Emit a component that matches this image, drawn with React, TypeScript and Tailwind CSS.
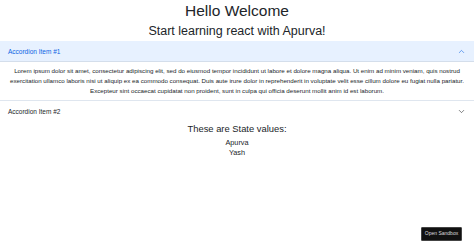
import { ChevronDown, ChevronUp } from "lucide-react"

const people = ["Apurva", "Yash"]

export default function App() {
  return (
    <div className="relative h-[248px] w-[474px] overflow-hidden bg-white font-['Liberation_Sans',Arial,sans-serif] text-[#212529]">
      <div className="text-center">
        <h1 className="pt-[1px] text-[15.5px] leading-[19px]">Hello Welcome</h1>
        <h2 className="mt-[2px] text-[12.5px] leading-[18px]">Start learning react with Apurva!</h2>
      </div>

      {/* accordion */}
      <div className="mt-[1px]">
        <div className="border-b border-[#dfe6ef]">
          <button className="flex h-[21px] w-full items-center justify-between bg-[#e7f1ff] px-[8px] text-[6.5px] text-[#0c63e4] shadow-[inset_0_-1px_0_rgba(0,0,0,0.08)]">
            <span>Accordion Item #1</span>
            <ChevronUp className="h-[9px] w-[9px]" strokeWidth={1.5} />
          </button>
          <p className="px-[6px] pb-[5px] pt-[4px] text-center text-[6.2px] leading-[9.8px]">
            Lorem ipsum dolor sit amet, consectetur adipiscing elit, sed do eiusmod tempor incididunt ut labore et dolore magna aliqua. Ut enim ad minim veniam, quis nostrud exercitation ullamco laboris nisi ut aliquip ex ea commodo consequat. Duis aute irure dolor in reprehenderit in voluptate velit esse cillum dolore eu fugiat nulla pariatur. Excepteur sint occaecat cupidatat non proident, sunt in culpa qui officia deserunt mollit anim id est laborum.
          </p>
        </div>
        <button className="flex h-[21px] w-full items-center justify-between px-[8px] text-[6.5px]">
          <span>Accordion Item #2</span>
          <ChevronDown className="h-[9px] w-[9px]" strokeWidth={1.5} />
        </button>
      </div>

      <div className="text-center">
        <h3 className="mt-[1px] text-[9.4px] leading-[12px]">These are State values:</h3>
        <div className="mt-[3px]">
          {people.map((p) => (
            <p key={p} className="text-[7.3px] leading-[10px]">{p}</p>
          ))}
        </div>
      </div>

      <button className="absolute left-[421px] top-[227px] h-[14px] w-[41px] rounded-[1px] border border-[#444] bg-[#111] text-[5px] text-[#ddd]">
        Open Sandbox
      </button>
    </div>
  )
}
